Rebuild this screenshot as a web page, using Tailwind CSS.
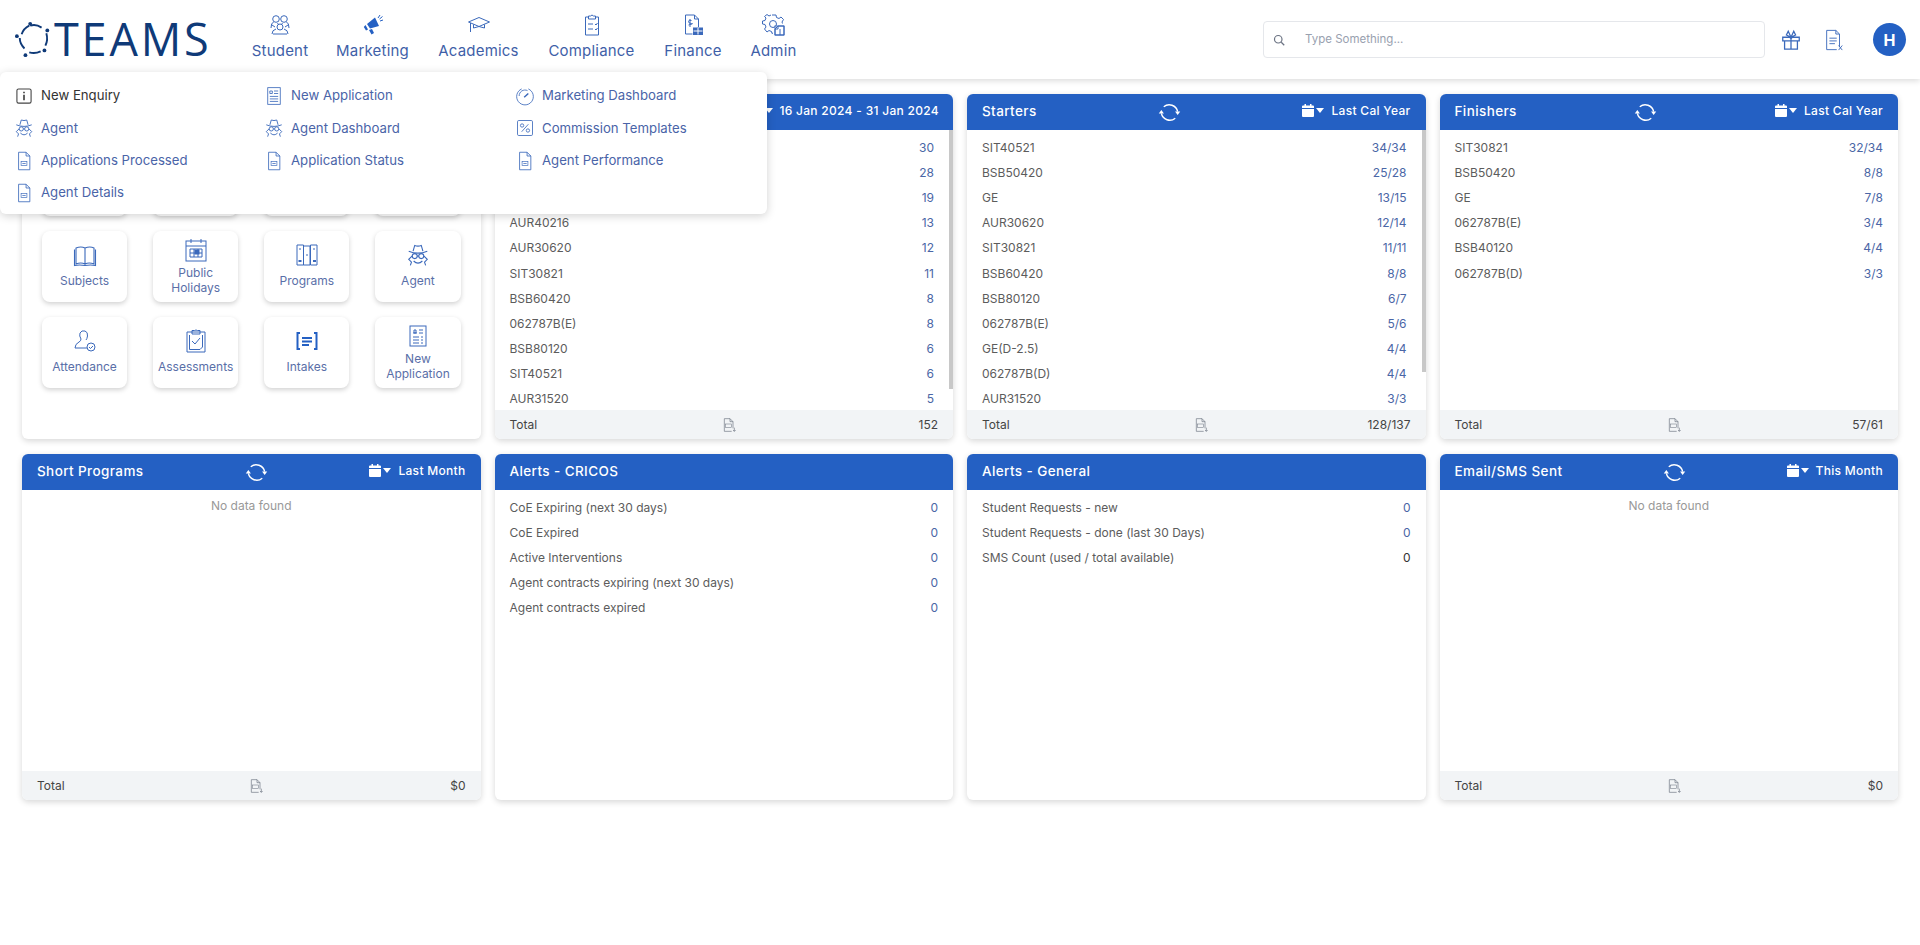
<!DOCTYPE html>
<html lang="en">
<head>
    <meta charset="UTF-8">
    <title>TEAMS Dashboard</title>
    <script src="https://cdn.jsdelivr.net/npm/@tailwindcss/browser@4"></script>
</head>
<body class="bg-white h-[945px] overflow-hidden font-[Inter,sans-serif]">
    <!-- shared icons -->
    <svg class="hidden">
        <symbol id="i-csv" viewBox="0 0 24 24"><path fill="none" stroke="currentColor" stroke-width="1" d="M5.500 1.500h9l4.500 4.500v16.500H5.500zM14.500 1.500V6H19"/><rect x="8.500" y="12.500" width="7" height="5" fill="none" stroke="currentColor" stroke-width=".8"/><path stroke="currentColor" stroke-width=".9" d="M10 15h4"/></symbol>
        <symbol id="i-agent" viewBox="2 1 20 22"><g fill="none" stroke="currentColor" stroke-width="1"><path d="M7.500 8.500 9 3.200q3 1.300 6 0l1.500 5.300"/><path d="M3.500 8.500q8.500 3.500 17 0"/><circle cx="9" cy="13" r="2.300"/><circle cx="15" cy="13" r="2.300"/><path d="M11.300 13h1.400M6.500 13 3.500 16l2.500 2.500-1 3M17.500 13l3 3-2.500 2.500 1 3M8 17.500q4 4 8 0"/></g></symbol>
        <symbol id="i-export" viewBox="0 0 24 24"><g fill="none" stroke="#6b7280" stroke-width="1"><path d="M5 2.500h8.500L18 7v10M5 2.500v19h11M13.500 2.500V7H18"/><rect x="6.500" y="10.500" width="9" height="5" stroke-width=".8"/><path d="M20 16v5.500M18 19.500l2 2 2-2"/></g></symbol>
        <symbol id="i-refresh" viewBox="0 0 24 24"><g fill="none" stroke="#fff" stroke-width="1.500"><path d="M6 6a9 9 0 0 1 14.500 5M18 18A9 9 0 0 1 3.500 13"/></g><path fill="#fff" d="M17.800 11h5.400l-2.700 3.600zM.8 13h5.400L3.500 9.400z"/></symbol>
        <symbol id="i-cal" viewBox="0 0 12 13"><path fill="#fff" d="M0 5h12v7a1 1 0 0 1-1 1H1a1 1 0 0 1-1-1zM1 1.500h1.500V0H4v1.500h4V0h1.500v1.500H11a1 1 0 0 1 1 1V4H0V2.500a1 1 0 0 1 1-1z"/></symbol>
        <symbol id="i-caret" viewBox="0 0 8 5"><path fill="#fff" d="M0 0h8L4 5z"/></symbol>
    </svg>

    <header class="relative z-20 h-[79px] bg-white shadow-[0_2px_6px_rgba(0,0,0,0.14)] flex items-start">
        <div class="w-[237px] flex items-center pl-[15px] pt-[19px]">
            <svg class="w-[38px] h-[38px] text-[#0f3a78]" viewBox="0 0 40 40" fill="none" stroke="currentColor">
                <path stroke-width="2" d="M16 6q6-2 12 2M33 14q2 7-1 13M27 33q-6 3-12 1M10 30q-5-5-5-11M7 15q2-6 8-9"/>
                <g fill="currentColor" stroke="none"><circle cx="16" cy="4" r="2"/><circle cx="34" cy="11" r="2"/><circle cx="31" cy="32" r="2"/><circle cx="11" cy="37" r="2"/><circle cx="2" cy="17" r="2"/></g>
            </svg>
            <span class="text-[45px] leading-[40px] font-medium tracking-[2.800px] text-[#0f3a78] font-['Open_Sans',sans-serif] ml-[1px]">TEAMS</span>
        </div>
        <nav class="flex text-[15px] leading-[20px] text-[#3f5fa8] pt-[13px] pl-[15px] tracking-[0.200px]">
            <a class="w-[56px] flex flex-col items-center">
                <svg class="w-[24px] h-[24px] text-[#3b69bb]" viewBox="0 0 24 24" fill="none" stroke="currentColor" stroke-width="1"><circle cx="8" cy="6" r="3.300"/><circle cx="16" cy="6" r="3.300"/><circle cx="12" cy="14" r="3"/><path d="M3 15q0-5 2.500-6M21 15q0-5-2.500-6M4 12l3 2M20 12l-3 2M4 21q0-4 4-5M20 21q0-4-4-5M5 21h14M9.500 10l1 1.500M14.500 10l-1 1.500"/></svg>
                <span class="mt-[4px]">Student</span>
            </a>
            <a class="w-[71px] ml-[29px] flex flex-col items-center">
                <svg class="w-[24px] h-[24px] text-[#2460c3]" viewBox="0 0 24 24"><path fill="currentColor" d="M6 11 14 4.500 18 13l-9 2.500zM4.500 12 7 16.500 5 17.500 2.800 14zM8 17l3-1 2 4-2.500 1.500z"/><path fill="none" stroke="currentColor" d="M17 5l2-3M19 8l3-1M18.500 6l3-2.500"/></svg>
                <span class="mt-[4px]">Marketing</span>
            </a>
            <a class="w-[81px] ml-[30px] flex flex-col items-center">
                <svg class="w-[24px] h-[24px] text-[#3b69bb]" viewBox="0 0 24 24" fill="none" stroke="currentColor" stroke-width="1"><path d="M1.500 9 12 4.500 22.500 9 12 13.500zM6.500 11.500V15q5.500-3 11 0v-3.500M3.500 10v9"/></svg>
                <span class="mt-[4px]">Academics</span>
            </a>
            <a class="w-[89px] ml-[28px] flex flex-col items-center">
                <svg class="w-[24px] h-[24px] text-[#3b69bb]" viewBox="0 0 24 24" fill="none" stroke="currentColor" stroke-width="1"><path d="M8.500 4H5.500v18h13V4h-3M8.500 3h2q1.500-2 3 0h2v3h-7zM8 11h5M8 16h5M15 11l1 1 1.500-2M15 16l1 1 1.500-2"/></svg>
                <span class="mt-[4px]">Compliance</span>
            </a>
            <a class="w-[56px] ml-[29px] flex flex-col items-center">
                <svg class="w-[24px] h-[24px] text-[#3b69bb]" viewBox="0 0 24 24" fill="none" stroke="currentColor" stroke-width="1"><path d="M4.500 2h9l4 4v8M4.500 2v19h7M13.500 2v4h4"/><path d="M10.500 7.500q-3-1-3 1t3 2-3 1.500M9 6v8"/><rect x="12.500" y="15" width="9" height="6.500" fill="currentColor"/><path stroke="#fff" d="M17 15v6.500M12.500 18h9"/></svg>
                <span class="mt-[4px]">Finance</span>
            </a>
            <a class="w-[47px] ml-[29px] flex flex-col items-center">
                <svg class="w-[24px] h-[24px] text-[#3b69bb]" viewBox="0 0 24 24" fill="none" stroke="currentColor" stroke-width="1"><path d="M10 2h4l.5 2.500 2.500 1 2-1.500 2.500 2.500-1.500 2.500.5 1.500M11 20l-1 .5-.5-2-2.500-1-2 1.500L2.500 16 4 14l-1-2.500-2.500-.5V8l2.500-.5 1-2.500L2.500 3.500 5 1.500 7 3l2-1"/><circle cx="11" cy="11" r="3.500"/><rect x="13" y="13" width="9" height="9" fill="#fff"/><path d="M16 13h6v9h-9v-6zM16 13v3h-3M18 16v6"/></svg>
                <span class="mt-[4px]">Admin</span>
            </a>
        </nav>
        <div class="ml-auto flex items-center pt-[21px] pr-[14px]">
            <div class="w-[502px] h-[37px] border border-gray-200 rounded flex items-center pl-[9px] text-[11.500px] text-gray-400">
                <svg class="w-[12px] h-[12px] text-gray-500" viewBox="0 0 16 16" fill="none" stroke="currentColor" stroke-width="1.600"><circle cx="7" cy="7" r="5"/><path d="m11 11 4 4"/></svg>
                <span class="ml-[20px]">Type Something...</span>
            </div>
            <svg class="w-[22px] h-[24px] ml-[15px] text-[#3b69bb]" viewBox="0 0 24 24" fill="none" stroke="currentColor" stroke-width="1.400"><path d="M3 9h18v4H3zM5 13v9h14v-9M12 9v13M12 9 7 6.500 9 2.500zM12 9l5-2.500L15 2.500z"/></svg>
            <svg class="w-[22px] h-[24px] ml-[21px] text-[#3b69bb]" viewBox="0 0 24 24" fill="none" stroke="currentColor" stroke-width="1"><path d="M4 1.500h10l4 4v14M4 1.500v21h11M14 1.500v4h4M7 10h8M7 13h8M7 16h6M17 18l4 5M21 18l-4 5"/></svg>
            <div class="w-[33px] h-[33px] ml-[28px] rounded-full bg-[#2460c3] text-white text-[16px] font-bold flex items-center justify-center">H</div>
        </div>
    </header>

    <!-- open Marketing menu -->
    <div class="absolute z-30 left-0 top-[72px] w-[767px] h-[142px] bg-white rounded-md shadow-[0_2px_10px_rgba(0,0,0,0.18)] pl-[14px] pt-[8px] grid grid-cols-[250px_251px_250px] auto-rows-[32.300px] text-[13.200px] text-[#4a64a8]">
        <a class="flex items-center gap-[7px] text-[#333]"><svg class="w-[20px] h-[20px] text-[#444]" viewBox="0 0 24 24" fill="none" stroke="currentColor" stroke-width="1.300"><rect x="3.500" y="3.500" width="17" height="17" rx="2"/><path stroke-width="2" d="M12 10.500V17M12 7v1.800"/></svg>New Enquiry</a>
        <a class="flex items-center gap-[7px]"><svg class="w-[20px] h-[20px] text-[#3b69bb]" viewBox="0 0 24 24" fill="none" stroke="currentColor" stroke-width="1"><rect x="4.500" y="2" width="15" height="20"/><path d="M7 6h3v3H7zM12 6h5M12 9h5M7 12.500h10M7 15.500h10M7 18.500h10"/></svg>New Application</a>
        <a class="flex items-center gap-[7px]"><svg class="w-[20px] h-[20px] text-[#3b69bb]" viewBox="0 0 24 24" fill="none" stroke="currentColor" stroke-width="1"><path d="M8 3.500a10 10 0 1 0 8 0"/><path d="M5 12a7 7 0 0 1 10-6.500"/><path stroke-width="1.800" d="m11 13.500 5-4.500"/></svg>Marketing Dashboard</a>
        <a class="flex items-center gap-[7px]"><svg class="w-[20px] h-[20px] text-[#3b69bb]"><use href="#i-agent"/></svg>Agent</a>
        <a class="flex items-center gap-[7px]"><svg class="w-[20px] h-[20px] text-[#3b69bb]"><use href="#i-agent"/></svg>Agent Dashboard</a>
        <a class="flex items-center gap-[7px]"><svg class="w-[20px] h-[20px] text-[#3b69bb]" viewBox="0 0 24 24" fill="none" stroke="currentColor" stroke-width="1"><rect x="3" y="3" width="18" height="18" rx="1.500"/><circle cx="8.500" cy="9" r="2"/><circle cx="15.500" cy="15" r="2"/><path d="M16 7.500 8 16.500"/></svg>Commission Templates</a>
        <a class="flex items-center gap-[7px]"><svg class="w-[20px] h-[20px] text-[#3b69bb]"><use href="#i-csv"/></svg>Applications Processed</a>
        <a class="flex items-center gap-[7px]"><svg class="w-[20px] h-[20px] text-[#3b69bb]"><use href="#i-csv"/></svg>Application Status</a>
        <a class="flex items-center gap-[7px]"><svg class="w-[20px] h-[20px] text-[#3b69bb]"><use href="#i-csv"/></svg>Agent Performance</a>
        <a class="flex items-center gap-[7px]"><svg class="w-[20px] h-[20px] text-[#3b69bb]"><use href="#i-csv"/></svg>Agent Details</a>
    </div>

    <main class="px-[22px] pt-[15px] grid grid-cols-4 gap-x-[14px] gap-y-[15px] grid-rows-[345px_346px] text-[12px] text-[#5c5c5c]">
        <!-- quick links, top of this card sits under the menu -->
        <section class="rounded-md bg-white shadow-[0_2px_6px_rgba(0,0,0,0.16)] px-[20px] pt-[51px]">
            <div class="grid grid-cols-4 gap-x-[26px] gap-y-[15px] auto-rows-[71px] text-[#5a6fa8] text-center leading-[15px]">
                <div class="rounded-lg bg-white shadow-[0_2px_5px_rgba(0,0,0,0.18)]"></div>
                <div class="rounded-lg bg-white shadow-[0_2px_5px_rgba(0,0,0,0.18)]"></div>
                <div class="rounded-lg bg-white shadow-[0_2px_5px_rgba(0,0,0,0.18)]"></div>
                <div class="rounded-lg bg-white shadow-[0_2px_5px_rgba(0,0,0,0.18)]"></div>
                <a class="rounded-lg bg-white shadow-[0_2px_5px_rgba(0,0,0,0.18)] flex flex-col items-center justify-center gap-[6px] pb-[2px]">
                    <svg class="w-[24px] h-[24px] text-[#3b69bb]" viewBox="0 0 24 24" fill="none" stroke="currentColor" stroke-width="1.100"><path d="M3 5q5-2 9 0v16q-4-2-9 0zM12 5q5-2 9 0v16q-5-2-9 0z"/><path d="M1.500 6.500v16q5-1 10.500 0 5.500-1 10.500 0v-16"/></svg>
                    <span>Subjects</span>
                </a>
                <a class="rounded-lg bg-white shadow-[0_2px_5px_rgba(0,0,0,0.18)] flex flex-col items-center justify-center gap-[3px]">
                    <svg class="w-[24px] h-[24px] text-[#3b69bb]" viewBox="0 0 24 24" fill="none" stroke="currentColor" stroke-width="1"><rect x="2" y="3" width="20" height="20"/><path d="M2 8h20M7 1v4M17 1v4M6 11h12v8H6zM10 11v8M14 11v8M6 15h12"/><rect x="11" y="12" width="4" height="4" fill="currentColor"/></svg>
                    <span>Public<br>Holidays</span>
                </a>
                <a class="rounded-lg bg-white shadow-[0_2px_5px_rgba(0,0,0,0.18)] flex flex-col items-center justify-center gap-[6px] pb-[2px]">
                    <svg class="w-[24px] h-[24px] text-[#3b69bb]" viewBox="0 0 24 24" fill="none" stroke="currentColor" stroke-width="1"><path d="M2 2h6.500v20H2zM8.500 3h6.500v19H8.500zM15.500 2H22v20h-6.500zM4 6h2M11 12h2M18 6h2"/><path stroke-width="2" d="M3.500 18h3M18 18h3"/></svg>
                    <span>Programs</span>
                </a>
                <a class="rounded-lg bg-white shadow-[0_2px_5px_rgba(0,0,0,0.18)] flex flex-col items-center justify-center gap-[6px] pb-[2px]">
                    <svg class="w-[24px] h-[24px] text-[#3b69bb]"><use href="#i-agent"/></svg>
                    <span>Agent</span>
                </a>
                <a class="rounded-lg bg-white shadow-[0_2px_5px_rgba(0,0,0,0.18)] flex flex-col items-center justify-center gap-[6px] pb-[2px]">
                    <svg class="w-[24px] h-[24px] text-[#3b69bb]" viewBox="0 0 24 24" fill="none" stroke="currentColor" stroke-width="1"><path d="M14 19H2q0-4 4-6 2-1 2-3-2-3-1-6 1.500-3 5-2 3 1 2.500 5-.5 3-1.500 4"/><circle cx="18" cy="18" r="4"/><path d="m16 18 1.500 1.500L20 17"/></svg>
                    <span>Attendance</span>
                </a>
                <a class="rounded-lg bg-white shadow-[0_2px_5px_rgba(0,0,0,0.18)] flex flex-col items-center justify-center gap-[6px] pb-[2px]">
                    <svg class="w-[24px] h-[24px] text-[#3b69bb]" viewBox="0 0 24 24" fill="none" stroke="currentColor" stroke-width="1"><path d="M3 3h18v20H3zM8 3V1.500h2.500q1.500-1 3 0H16V5H8zM5.500 6v14.500H16l2.500-2.500V6M8 12l3 3 5-6"/></svg>
                    <span>Assessments</span>
                </a>
                <a class="rounded-lg bg-white shadow-[0_2px_5px_rgba(0,0,0,0.18)] flex flex-col items-center justify-center gap-[6px] pb-[2px]">
                    <svg class="w-[24px] h-[24px] text-[#2460c3]" viewBox="0 0 24 24" fill="none" stroke="currentColor" stroke-width="2"><path d="M5 4H2.500v16H5M19 4h2.500v16H19M7 9h10M7 12.500h10M7 16h7"/></svg>
                    <span>Intakes</span>
                </a>
                <a class="rounded-lg bg-white shadow-[0_2px_5px_rgba(0,0,0,0.18)] flex flex-col items-center justify-center gap-[3px]">
                    <svg class="w-[24px] h-[24px] text-[#3b69bb]" viewBox="0 0 24 24" fill="none" stroke="currentColor" stroke-width="1"><rect x="4" y="2" width="16" height="20"/><path d="M7 9h4M8 6h2v3H8zM13 6h4M13 9h4M7 13h6M15 13h2M7 16h6M15 16h2M7 19h6M15 19h2"/></svg>
                    <span>New<br>Application</span>
                </a>
            </div>
        </section>

        <!-- column title under the menu -->
        <section class="rounded-md bg-white shadow-[0_2px_6px_rgba(0,0,0,0.16)] flex flex-col overflow-hidden">
            <div class="h-[36px] shrink-0 bg-[#2460c3] text-white flex items-center justify-end px-[14px] text-[12px] font-medium tracking-[0.300px]">
                <span class="flex items-center -mt-[3px] gap-[6px]"><svg class="w-[8px] h-[5px]"><use href="#i-caret"/></svg>16 Jan 2024 - 31 Jan 2024</span>
            </div>
            <div class="flex-1 flex min-h-0">
                <div class="flex-1 pt-[5px] pl-[15px] pr-[15px] overflow-hidden text-[#4a66a6]">
                    <div class="flex justify-end items-center h-[25.200px]">30</div>
                    <div class="flex justify-end items-center h-[25.200px]">28</div>
                    <div class="flex justify-end items-center h-[25.200px]">19</div>
                    <div class="flex justify-between items-center h-[25.200px]"><span class="text-[#5c5c5c]">AUR40216</span><span>13</span></div>
                    <div class="flex justify-between items-center h-[25.200px]"><span class="text-[#5c5c5c]">AUR30620</span><span>12</span></div>
                    <div class="flex justify-between items-center h-[25.200px]"><span class="text-[#5c5c5c]">SIT30821</span><span>11</span></div>
                    <div class="flex justify-between items-center h-[25.200px]"><span class="text-[#5c5c5c]">BSB60420</span><span>8</span></div>
                    <div class="flex justify-between items-center h-[25.200px]"><span class="text-[#5c5c5c]">062787B(E)</span><span>8</span></div>
                    <div class="flex justify-between items-center h-[25.200px]"><span class="text-[#5c5c5c]">BSB80120</span><span>6</span></div>
                    <div class="flex justify-between items-center h-[25.200px]"><span class="text-[#5c5c5c]">SIT40521</span><span>6</span></div>
                    <div class="flex justify-between items-center h-[25.200px]"><span class="text-[#5c5c5c]">AUR31520</span><span>5</span></div>
                </div>
                <div class="w-[4px] h-[259px] bg-[#c8c8c8]"></div>
            </div>
            <div class="h-[29px] shrink-0 bg-[#f2f4f6] px-[15px] flex items-center text-[#444]">
                <span class="flex-1">Total</span><svg class="w-[16px] h-[16px] ml-[10px]"><use href="#i-export"/></svg><span class="flex-1 text-right">152</span>
            </div>
        </section>

        <section class="rounded-md bg-white shadow-[0_2px_6px_rgba(0,0,0,0.16)] flex flex-col overflow-hidden">
            <div class="h-[36px] shrink-0 bg-[#2460c3] text-white flex items-center justify-between px-[15px] text-[13.500px] font-medium tracking-[0.400px]">
                <span class="-mt-[2px]">Starters</span>
                <svg class="w-[23px] h-[23px]"><use href="#i-refresh"/></svg>
                <span class="flex items-center gap-[5px] -mt-[3px] text-[12px] tracking-[0.300px]"><svg class="w-[12px] h-[13px]"><use href="#i-cal"/></svg><svg class="w-[8px] h-[5px] -ml-[3px] mr-[2px]"><use href="#i-caret"/></svg>Last Cal Year</span>
            </div>
            <div class="flex-1 flex min-h-0">
                <div class="flex-1 pt-[5px] pl-[15px] pr-[15px] overflow-hidden text-[#4a66a6]">
                    <div class="flex justify-between items-center h-[25.200px]"><span class="text-[#5c5c5c]">SIT40521</span><span>34/34</span></div>
                    <div class="flex justify-between items-center h-[25.200px]"><span class="text-[#5c5c5c]">BSB50420</span><span>25/28</span></div>
                    <div class="flex justify-between items-center h-[25.200px]"><span class="text-[#5c5c5c]">GE</span><span>13/15</span></div>
                    <div class="flex justify-between items-center h-[25.200px]"><span class="text-[#5c5c5c]">AUR30620</span><span>12/14</span></div>
                    <div class="flex justify-between items-center h-[25.200px]"><span class="text-[#5c5c5c]">SIT30821</span><span>11/11</span></div>
                    <div class="flex justify-between items-center h-[25.200px]"><span class="text-[#5c5c5c]">BSB60420</span><span>8/8</span></div>
                    <div class="flex justify-between items-center h-[25.200px]"><span class="text-[#5c5c5c]">BSB80120</span><span>6/7</span></div>
                    <div class="flex justify-between items-center h-[25.200px]"><span class="text-[#5c5c5c]">062787B(E)</span><span>5/6</span></div>
                    <div class="flex justify-between items-center h-[25.200px]"><span class="text-[#5c5c5c]">GE(D-2.5)</span><span>4/4</span></div>
                    <div class="flex justify-between items-center h-[25.200px]"><span class="text-[#5c5c5c]">062787B(D)</span><span>4/4</span></div>
                    <div class="flex justify-between items-center h-[25.200px]"><span class="text-[#5c5c5c]">AUR31520</span><span>3/3</span></div>
                </div>
                <div class="w-[4px] h-[242px] bg-[#c8c8c8]"></div>
            </div>
            <div class="h-[29px] shrink-0 bg-[#f2f4f6] px-[15px] flex items-center text-[#444]">
                <span class="flex-1">Total</span><svg class="w-[16px] h-[16px] ml-[10px]"><use href="#i-export"/></svg><span class="flex-1 text-right">128/137</span>
            </div>
        </section>

        <section class="rounded-md bg-white shadow-[0_2px_6px_rgba(0,0,0,0.16)] flex flex-col overflow-hidden">
            <div class="h-[36px] shrink-0 bg-[#2460c3] text-white flex items-center justify-between px-[15px] text-[13.500px] font-medium tracking-[0.400px]">
                <span class="-mt-[2px]">Finishers</span>
                <svg class="w-[23px] h-[23px]"><use href="#i-refresh"/></svg>
                <span class="flex items-center gap-[5px] -mt-[3px] text-[12px] tracking-[0.300px]"><svg class="w-[12px] h-[13px]"><use href="#i-cal"/></svg><svg class="w-[8px] h-[5px] -ml-[3px] mr-[2px]"><use href="#i-caret"/></svg>Last Cal Year</span>
            </div>
            <div class="flex-1 pt-[5px] px-[15px] text-[#4a66a6]">
                <div class="flex justify-between items-center h-[25.200px]"><span class="text-[#5c5c5c]">SIT30821</span><span>32/34</span></div>
                <div class="flex justify-between items-center h-[25.200px]"><span class="text-[#5c5c5c]">BSB50420</span><span>8/8</span></div>
                <div class="flex justify-between items-center h-[25.200px]"><span class="text-[#5c5c5c]">GE</span><span>7/8</span></div>
                <div class="flex justify-between items-center h-[25.200px]"><span class="text-[#5c5c5c]">062787B(E)</span><span>3/4</span></div>
                <div class="flex justify-between items-center h-[25.200px]"><span class="text-[#5c5c5c]">BSB40120</span><span>4/4</span></div>
                <div class="flex justify-between items-center h-[25.200px]"><span class="text-[#5c5c5c]">062787B(D)</span><span>3/3</span></div>
            </div>
            <div class="h-[29px] shrink-0 bg-[#f2f4f6] px-[15px] flex items-center text-[#444]">
                <span class="flex-1">Total</span><svg class="w-[16px] h-[16px] ml-[10px]"><use href="#i-export"/></svg><span class="flex-1 text-right">57/61</span>
            </div>
        </section>

        <section class="rounded-md bg-white shadow-[0_2px_6px_rgba(0,0,0,0.16)] flex flex-col overflow-hidden">
            <div class="h-[36px] shrink-0 bg-[#2460c3] text-white flex items-center justify-between px-[15px] text-[13.500px] font-medium tracking-[0.400px]">
                <span class="-mt-[2px]">Short Programs</span>
                <svg class="w-[23px] h-[23px]"><use href="#i-refresh"/></svg>
                <span class="flex items-center gap-[5px] -mt-[3px] text-[12px] tracking-[0.300px]"><svg class="w-[12px] h-[13px]"><use href="#i-cal"/></svg><svg class="w-[8px] h-[5px] -ml-[3px] mr-[2px]"><use href="#i-caret"/></svg>Last Month</span>
            </div>
            <div class="flex-1 pt-[7px] text-center text-[#999]">No data found</div>
            <div class="h-[29px] shrink-0 bg-[#f2f4f6] px-[15px] flex items-center text-[#444]">
                <span class="flex-1">Total</span><svg class="w-[16px] h-[16px] ml-[10px]"><use href="#i-export"/></svg><span class="flex-1 text-right">$0</span>
            </div>
        </section>

        <section class="rounded-md bg-white shadow-[0_2px_6px_rgba(0,0,0,0.16)] flex flex-col overflow-hidden">
            <div class="h-[36px] shrink-0 bg-[#2460c3] text-white flex items-center px-[15px] text-[13.500px] font-medium tracking-[0.400px]"><span class="-mt-[2px]">Alerts - CRICOS</span></div>
            <div class="flex-1 pt-[5px] px-[15px] text-[#4a66a6]">
                <div class="flex justify-between items-center h-[25.200px]"><span class="text-[#5c5c5c]">CoE Expiring (next 30 days)</span><span>0</span></div>
                <div class="flex justify-between items-center h-[25.200px]"><span class="text-[#5c5c5c]">CoE Expired</span><span>0</span></div>
                <div class="flex justify-between items-center h-[25.200px]"><span class="text-[#5c5c5c]">Active Interventions</span><span>0</span></div>
                <div class="flex justify-between items-center h-[25.200px]"><span class="text-[#5c5c5c]">Agent contracts expiring (next 30 days)</span><span>0</span></div>
                <div class="flex justify-between items-center h-[25.200px]"><span class="text-[#5c5c5c]">Agent contracts expired</span><span>0</span></div>
            </div>
        </section>

        <section class="rounded-md bg-white shadow-[0_2px_6px_rgba(0,0,0,0.16)] flex flex-col overflow-hidden">
            <div class="h-[36px] shrink-0 bg-[#2460c3] text-white flex items-center px-[15px] text-[13.500px] font-medium tracking-[0.400px]"><span class="-mt-[2px]">Alerts - General</span></div>
            <div class="flex-1 pt-[5px] px-[15px] text-[#4a66a6]">
                <div class="flex justify-between items-center h-[25.200px]"><span class="text-[#5c5c5c]">Student Requests - new</span><span>0</span></div>
                <div class="flex justify-between items-center h-[25.200px]"><span class="text-[#5c5c5c]">Student Requests - done (last 30 Days)</span><span>0</span></div>
                <div class="flex justify-between items-center h-[25.200px]"><span class="text-[#5c5c5c]">SMS Count (used / total available)</span><span class="text-[#333]">0</span></div>
            </div>
        </section>

        <section class="rounded-md bg-white shadow-[0_2px_6px_rgba(0,0,0,0.16)] flex flex-col overflow-hidden">
            <div class="h-[36px] shrink-0 bg-[#2460c3] text-white flex items-center justify-between px-[15px] text-[13.500px] font-medium tracking-[0.400px]">
                <span class="-mt-[2px]">Email/SMS Sent</span>
                <svg class="w-[23px] h-[23px]"><use href="#i-refresh"/></svg>
                <span class="flex items-center gap-[5px] -mt-[3px] text-[12px] tracking-[0.300px]"><svg class="w-[12px] h-[13px]"><use href="#i-cal"/></svg><svg class="w-[8px] h-[5px] -ml-[3px] mr-[2px]"><use href="#i-caret"/></svg>This Month</span>
            </div>
            <div class="flex-1 pt-[7px] text-center text-[#999]">No data found</div>
            <div class="h-[29px] shrink-0 bg-[#f2f4f6] px-[15px] flex items-center text-[#444]">
                <span class="flex-1">Total</span><svg class="w-[16px] h-[16px] ml-[10px]"><use href="#i-export"/></svg><span class="flex-1 text-right">$0</span>
            </div>
        </section>
    </main>
</body>
</html>
